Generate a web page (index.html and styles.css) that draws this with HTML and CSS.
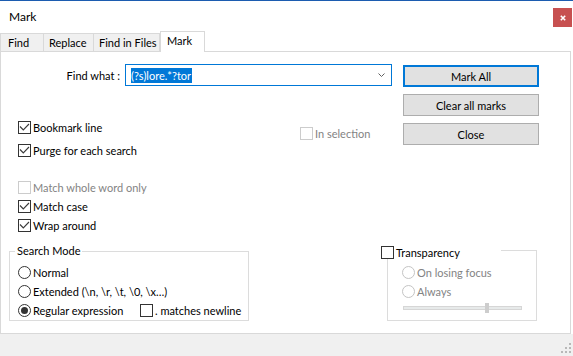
FILE: index.html
```html
<!DOCTYPE html>
<html>
<head>
<meta charset="utf-8">
<link rel="stylesheet" href="styles.css">
</head>
<body>
<div class="win">
  <div class="titlebar">
    <span class="title">Mark</span>
    <span class="close"><svg width="6" height="6" viewBox="0 0 6 6"><path d="M0.8 0.8 L5.2 5.2 M5.2 0.8 L0.8 5.2" stroke="#fff" stroke-width="1.6" fill="none"/></svg></span>
  </div>
  <div class="tabs">
    <div class="tab t1">Find</div>
    <div class="tab t2">Replace</div>
    <div class="tab t3">Find in Files</div>
    <div class="tab t4 active">Mark</div>
  </div>
  <div class="panel">
    <div class="upper">
      <div class="leftcol">
        <div class="findrow">
          <span class="flabel">Find what :</span>
          <div class="combo">
            <span class="sel">(?s)lore.*?tor</span>
            <svg class="chev" width="7" height="4" viewBox="0 0 7 4"><polyline points="0.5,0.5 3.5,3.5 6.5,0.5" stroke="#606060" stroke-width="1" fill="none"/></svg>
          </div>
        </div>
        <div class="optrow">
          <div class="optcol">
            <label class="chk"><span class="box"><svg width="11" height="11" viewBox="0 0 11 11"><polyline points="1,4.5 4.3,8 10,2" stroke="#3a3a3a" stroke-width="1.1" fill="none"/></svg></span>Bookmark line</label>
            <label class="chk"><span class="box"><svg width="11" height="11" viewBox="0 0 11 11"><polyline points="1,4.5 4.3,8 10,2" stroke="#3a3a3a" stroke-width="1.1" fill="none"/></svg></span>Purge for each search</label>
          </div>
          <label class="chk dis insel"><span class="box"></span>In selection</label>
        </div>
      </div>
      <div class="btns">
        <div class="btn def">Mark All</div>
        <div class="btn">Clear all marks</div>
        <div class="btn">Close</div>
      </div>
    </div>
    <div class="mopts">
      <label class="chk dis"><span class="box"></span>Match whole word only</label>
      <label class="chk"><span class="box"><svg width="11" height="11" viewBox="0 0 11 11"><polyline points="1,4.5 4.3,8 10,2" stroke="#3a3a3a" stroke-width="1.1" fill="none"/></svg></span>Match case</label>
      <label class="chk"><span class="box"><svg width="11" height="11" viewBox="0 0 11 11"><polyline points="1,4.5 4.3,8 10,2" stroke="#3a3a3a" stroke-width="1.1" fill="none"/></svg></span>Wrap around</label>
    </div>
    <div class="groups">
      <fieldset class="grp smode">
        <legend>Search Mode</legend>
        <div class="rows">
          <label class="chk"><span class="radio"></span>Normal</label>
          <label class="chk"><span class="radio"></span>Extended (\n, \r, \t, \0, \x…)</label>
          <div class="regrow">
            <label class="chk regl"><span class="radio"><span class="dot"></span></span>Regular expression</label>
            <label class="chk"><span class="box"></span>. matches newline</label>
          </div>
        </div>
      </fieldset>
      <fieldset class="grp transp">
        <legend><label class="chk tl"><span class="box"></span>Transparency</label></legend>
        <div class="trows">
          <label class="chk dis"><span class="radio"></span>On losing focus</label>
          <label class="chk dis"><span class="radio"></span>Always</label>
          <div class="slider"><div class="track"><span class="thumb"></span></div></div>
        </div>
      </fieldset>
    </div>
  </div>
  <div class="footer">
    <svg width="12" height="12" viewBox="0 0 12 12"><g fill="#b8b8b8"><rect x="9" y="0" width="2" height="2"/><rect x="5" y="4" width="2" height="2"/><rect x="9" y="4" width="2" height="2"/><rect x="1" y="8" width="2" height="2"/><rect x="5" y="8" width="2" height="2"/><rect x="9" y="8" width="2" height="2"/></g></svg>
  </div>
</div>
</body>
</html>
```
FILE: styles.css
```css
html, body { margin: 0; padding: 0; }
body {
  font: 11px Lato, "Liberation Sans", sans-serif;
  color: #000;
  background: #fff;
}
.win {
  width: 573px;
  height: 356px;
  display: flex;
  flex-direction: column;
  background: #fff;
  overflow: hidden;
}
.titlebar {
  height: 31px;
  box-sizing: border-box;
  border-top: 1px solid #1c5cb0;
  display: flex;
  align-items: center;
}
.title { margin-left: 9px; font-size: 12px; }
.close {
  margin-left: auto;
  margin-right: 1px;
  align-self: flex-start;
  margin-top: 7px;
  width: 19px;
  height: 19px;
  background: #c75050;
  display: grid;
  place-items: center;
}
.close svg { display: block; }

.tabs { height: 20px; display: flex; align-items: flex-end; }
.tab {
  box-sizing: border-box;
  height: 18px;
  border: 1px solid #d9d9d9;
  border-bottom: 0;
  background: #f0f0f0;
  line-height: 16px;
  padding-top: 1px;
  white-space: nowrap;
}
.t1 { width: 44px; padding-left: 7px; }
.t2 { width: 51px; margin-left: -1px; padding-left: 5px; }
.t3 { width: 67px; margin-left: -1px; padding-left: 5px; }
.t4 { width: 45px; padding-left: 6px; }
.tab.active {
  height: 21px;
  margin-bottom: -1px;
  background: #fff;
  position: relative;
  z-index: 1;
  line-height: 17px;
  padding-top: 0;
}

.panel {
  height: 283px;
  width: 571px;
  box-sizing: border-box;
  border: 1px solid #d9d9d9;
  background: #fff;
}
.upper { display: flex; margin-top: 12px; }
.leftcol { width: 391px; }
.findrow { display: flex; align-items: center; height: 22px; }
.flabel { width: 119px; text-align: right; }
.combo {
  margin-left: 5px;
  width: 267px;
  height: 22px;
  box-sizing: border-box;
  border: 1px solid #0078d7;
  display: flex;
  align-items: center;
  padding: 0 6px 0 5px;
}
.sel {
  background: #0078d7;
  color: #fff;
  height: 15px;
  line-height: 15px;
  padding-right: 1px;
}
.chev { margin-left: auto; display: block; }

.optrow { display: flex; margin-top: 35px; }
.optcol {
  width: 299px;
  padding-left: 17px;
  box-sizing: border-box;
  display: flex;
  flex-direction: column;
  gap: 10px;
}
.insel { margin-top: 6px; }

.btns {
  margin-left: 11px;
  margin-top: 1px;
  display: flex;
  flex-direction: column;
  gap: 7px;
}
.btn {
  width: 136px;
  height: 22px;
  box-sizing: border-box;
  border: 1px solid #adadad;
  background: #e1e1e1;
  display: flex;
  align-items: center;
  justify-content: center;
}
.btn.def { border: 2px solid #0078d7; }

.chk {
  display: flex;
  align-items: center;
  gap: 2px;
  height: 13px;
  line-height: 13px;
  white-space: nowrap;
}
.box {
  width: 13px;
  height: 13px;
  box-sizing: border-box;
  border: 1px solid #333;
  background: #fff;
  flex: none;
  display: grid;
  place-items: center;
}
.box svg { display: block; }
.radio {
  width: 13px;
  height: 13px;
  box-sizing: border-box;
  border: 1px solid #333;
  border-radius: 50%;
  background: #fff;
  flex: none;
  display: grid;
  place-items: center;
}
.dot { width: 7px; height: 7px; border-radius: 50%; background: #333; }
.chk.dis { color: #838383; }
.chk.dis .box { border-color: #cccccc; }
.chk.dis .radio { border-color: #c4c4c4; }

.mopts {
  margin-top: 24px;
  padding-left: 17px;
  display: flex;
  flex-direction: column;
  gap: 6px;
}

.groups { display: flex; align-items: flex-start; margin-top: 13px; }
.grp {
  border: 1px solid #dcdcdc;
  min-width: 0;
  box-sizing: border-box;
}
fieldset.smode { margin: 0 0 0 8px; width: 240px; padding: 0 0 3px 5px; }
.smode legend { padding: 0 2px; line-height: 12px; height: 12px; }
.rows {
  padding-top: 9px;
  margin-left: 3px;
  display: flex;
  flex-direction: column;
  gap: 6px;
}
.regrow { display: flex; }
.regl { width: 122px; }

fieldset.transp { margin: -1px 0 0 138px; width: 150px; padding: 0 0 7px 0; }
.transp legend {
  margin-left: -7px;
  width: 120px;
  padding: 4px 0 0 0;
  height: 12px;
  box-sizing: border-box;
}
.chk.tl { height: 8px; overflow: visible; }
.trows {
  padding-top: 10px;
  margin-left: 14px;
  display: flex;
  flex-direction: column;
  gap: 6px;
}
.slider {
  margin-top: -1px;
  margin-left: 1px;
  width: 119px;
  height: 10px;
  display: flex;
  align-items: center;
}
.track {
  width: 100%;
  height: 4px;
  box-sizing: border-box;
  background: #e7eaea;
  border: 1px solid #d6d6d6;
  position: relative;
}
.thumb {
  position: absolute;
  left: 81px;
  top: -4px;
  width: 4px;
  height: 10px;
  background: #cdcdcd;
}

.footer {
  flex: 1;
  background: #f0f0f0;
  display: flex;
  justify-content: flex-end;
  align-items: flex-end;
  padding: 0 1px 1px 0;
}
.footer svg { display: block; }
```
